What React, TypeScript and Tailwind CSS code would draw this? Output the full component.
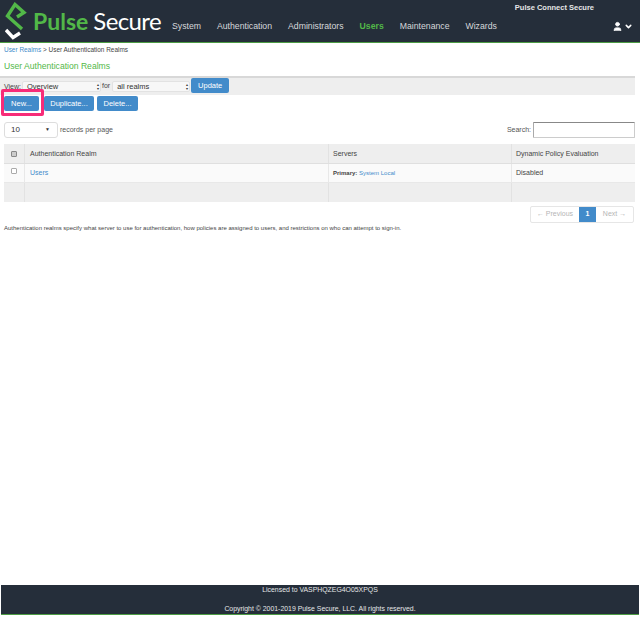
import React from 'react';
import { ChevronDown, User } from 'lucide-react';

const navItems = ['System', 'Authentication', 'Administrators', 'Users', 'Maintenance', 'Wizards'];

const Logo = () => (
  <div className="flex items-center w-[172px] pl-[5px] shrink-0">
    <svg width="24" height="38" viewBox="0 0 24 38" className="shrink-0">
      <path d="M12 15 L19 10.5 L10 2.5 L2.5 14 L17 27" fill="none" stroke="#52b848" strokeWidth="3.4" />
      <path d="M1 28 L8 35.5 L15 31" fill="none" stroke="#ffffff" strokeWidth="3.4" />
    </svg>
    <div className="ml-[4px] flex items-baseline font-['Lato',sans-serif] leading-none">
      <span className="text-[23px] font-bold text-[#52b848]">Pulse</span>
      <span className="ml-[5px] text-[24px] tracking-[-0.6px] text-white">Secure</span>
    </div>
  </div>
);

const Btn = ({ children, className = '' }: { children: React.ReactNode; className?: string }) => (
  <button className={`h-[15px] rounded-[2px] bg-[#428bca] text-[7.5px] text-white flex items-center justify-center ${className}`}>
    {children}
  </button>
);

const SelectBox = ({ label, className }: { label: string; className: string }) => (
  <div className={`h-[11px] rounded-[2px] bg-[#f7f7f7] border border-[#e2e2e2] flex items-center justify-between pl-[4px] pr-[1px] text-[7.5px] text-[#333] ${className}`}>
    <span>{label}</span>
    <span className="flex flex-col text-[4px] leading-[4px] text-[#333]">
      <span>▴</span>
      <span>▾</span>
    </span>
  </div>
);

export default function App() {
  return (
    <div className="h-[617px] w-[640px] flex flex-col bg-white font-['Liberation_Sans',sans-serif] text-[#333] overflow-hidden relative">
      <header className="h-[43px] bg-[#252e3a] border-b border-[#4d9c45] flex items-start shrink-0 relative">
        <div className="h-[42px] flex items-center">
          <Logo />
          <nav className="flex gap-[16px] pt-[12px] text-[8.7px]">
            {navItems.map((n) => (
              <span key={n} className={n === 'Users' ? 'text-[#52b848] font-bold' : 'text-[#d6d8da]'}>{n}</span>
            ))}
          </nav>
        </div>
        <div className="ml-auto flex flex-col items-end h-[42px] pr-[7px]">
          <span className="mt-[3px] mr-[39px] text-[7.5px] leading-[10px] font-bold text-[#e6e7e8]">Pulse Connect Secure</span>
          <div className="flex items-center gap-[1px] mt-[8px]">
            <User size={11} fill="#fff" color="#fff" />
            <ChevronDown size={9} color="#fff" strokeWidth={4} />
          </div>
        </div>
      </header>

      <div className="pl-[4px] pr-[5px] flex flex-col">
        <div className="mt-[2px] text-[6.45px] leading-[9px] text-[#444]">
          <span className="text-[#428bca]">User Realms</span> &gt; User Authentication Realms
        </div>
        <h1 className="mt-[6px] text-[8.6px] leading-[13px] font-normal text-[#52b848]">User Authentication Realms</h1>
      </div>

      <div className="mt-[3px] mr-[5px] h-[19px] bg-[#eeeeee] border-t-2 border-[#d8d8d8] flex items-start pl-[4px] text-[7px] text-[#444]">
        <span className="mt-[4px] leading-[10px]">View:</span>
        <SelectBox label="Overview" className="ml-[1px] mt-[3px] w-[79px]" />
        <span className="ml-[1px] mt-[3px] leading-[10px]">for</span>
        <SelectBox label="all realms" className="ml-[2px] mt-[3px] w-[78px]" />
        <Btn className="ml-[1px] w-[38px]">Update</Btn>
      </div>

      <div className="flex pl-[4px] mt-[1px]">
        <Btn className="w-[35px]">New...</Btn>
        <Btn className="ml-[5px] w-[50px]">Duplicate...</Btn>
        <Btn className="ml-[3px] w-[41px]">Delete...</Btn>
      </div>

      <div className="mt-[11px] pl-[4px] pr-[5px] flex items-center justify-between">
        <div className="flex items-center">
          <div className="w-[54px] h-[16px] rounded-[3px] border border-[#ddd] flex items-center justify-between pl-[6px] pr-[7px] text-[8px]">
            <span>10</span>
            <span className="text-[5px] text-[#333]">▼</span>
          </div>
          <span className="ml-[2px] text-[7px] text-[#555]">records per page</span>
        </div>
        <div className="flex items-center">
          <span className="text-[7px] text-[#555]">Search:</span>
          <div className="ml-[2px] w-[102px] h-[16px] border border-[#ccc] border-t-[#888] border-l-[#aaa] rounded-[1px]" />
        </div>
      </div>

      <div className="mt-[6px] ml-[4px] mr-[5px] text-[7px] text-[#444]">
        <div className="h-[20px] bg-[#eeeeee] border-b border-[#dfdfdf] flex items-center">
          <div className="w-[21px] h-full border-r border-[#e2e2e2] flex items-center justify-center">
            <span className="w-[6px] h-[6px] rounded-[1px] border border-[#888] bg-[#ccc]" />
          </div>
          <div className="w-[304px] pl-[5px] pt-px h-full border-r border-[#e2e2e2] flex items-center">Authentication Realm</div>
          <div className="w-[183px] pl-[4px] pt-px h-full border-r border-[#e2e2e2] flex items-center">Servers</div>
          <div className="flex-1 pl-[4px] pt-px">Dynamic Policy Evaluation</div>
        </div>
        <div className="h-[19px] bg-[#fafafa] border-b border-[#e8e8e8] flex items-center">
          <div className="w-[21px] h-full border-r border-[#e8e8e8] flex items-start justify-center pt-[4px]">
            <span className="w-[6px] h-[6px] rounded-[1px] border border-[#aaa] bg-white" />
          </div>
          <div className="w-[304px] pl-[5px] pt-px h-full border-r border-[#e8e8e8] flex items-center text-[#428bca]">Users</div>
          <div className="w-[183px] pl-[4px] pt-px h-full border-r border-[#e8e8e8] flex items-center text-[6px]">
            <b>Primary:</b>&nbsp;<span className="text-[#428bca]">System Local</span>
          </div>
          <div className="flex-1 pl-[4px] pt-px">Disabled</div>
        </div>
        <div className="h-[19px] bg-[#eeeeee] flex">
          <div className="w-[21px] border-r border-[#e2e2e2]" />
          <div className="w-[304px] border-r border-[#e2e2e2]" />
          <div className="w-[183px] border-r border-[#e2e2e2]" />
        </div>
      </div>

      <div className="mt-[4px] mr-[6px] self-end flex h-[17px] text-[7px] rounded-[2px] border border-[#e6e6e6]">
        <span className="w-[48px] flex items-center justify-center text-[#b5b5b5]">← Previous</span>
        <span className="w-[17px] bg-[#428bca] text-white font-bold flex items-center justify-center">1</span>
        <span className="w-[37px] flex items-center justify-center text-[#b5b5b5]">Next →</span>
      </div>

      <p className="mt-[1px] pl-[4px] text-[6px] leading-[9px] text-[#444]">
        Authentication realms specify what server to use for authentication, how policies are assigned to users, and restrictions on who can attempt to sign-in.
      </p>

      <footer className="mt-auto mb-[2px] mx-px h-[30px] bg-[#252e3a] border-b border-[#4d9c45] flex flex-col items-center text-[6.9px] text-[#e6e7e8]">
        <span className="leading-[10px]">Licensed to VASPHQZEG4O05XPQS</span>
        <span className="mt-[9px] leading-[10px]">Copyright © 2001-2019 Pulse Secure, LLC. All rights reserved.</span>
      </footer>

      <div className="absolute left-[1px] top-[89px] w-[43px] h-[27px] border-[3px] border-[#f72c78] rounded-[2px]" />
    </div>
  );
}
